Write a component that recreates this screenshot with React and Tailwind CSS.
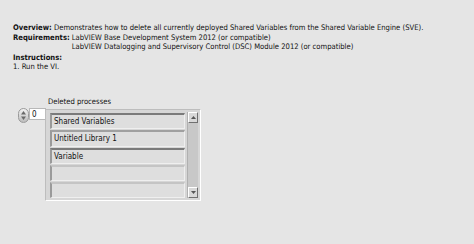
export default function App() {
  const rows = [
    { text: "Shared Variables", top: "border-t-[#7a7a7a]" },
    { text: "Untitled Library 1", top: "border-t-[#a0a0a0]" },
    { text: "Variable", top: "border-t-[#7a7a7a]" },
    { text: "", top: "border-t-[#c4c4c4]" },
    { text: "", top: "border-t-[#c4c4c4]" },
  ];

  return (
    <div
      className="w-[474px] h-[244px] bg-[#e5e5e5] overflow-hidden text-[#111] text-[7.6px] leading-[9.5px]"
      style={{ fontFamily: "'DejaVu Sans Condensed', Tahoma, sans-serif" }}
    >
      {/* Description */}
      <div className="pt-[23px] pl-[13px]">
        <div className="whitespace-nowrap">
          <span className="font-bold">Overview:</span> Demonstrates how to delete all currently deployed Shared Variables from the Shared Variable Engine (SVE).
        </div>
        <div className="flex whitespace-nowrap">
          <span className="font-bold mr-[2px]">Requirements:</span>
          <div>
            <div>LabVIEW Base Development System 2012 (or compatible)</div>
            <div>LabVIEW Datalogging and Supervisory Control (DSC) Module 2012 (or compatible)</div>
          </div>
        </div>
        <div className="font-bold mt-[1px]">Instructions:</div>
        <div>1. Run the VI.</div>
      </div>

      {/* Array control */}
      <div className="flex items-start mt-[25px] pl-[18px]">
        {/* Index */}
        <div className="flex items-start mt-[11px]">
          <div className="w-[11px] h-[15px] rounded-full border border-[#9a9a9a] bg-gradient-to-b from-[#f2f2f2] to-[#bdbdbd] flex flex-col items-center justify-center">
            <svg width="7" height="11" viewBox="0 0 7 11">
              <path d="M3.5 1 L6 4.5 H1 Z" fill="#6a6a6a" />
              <path d="M3.5 10 L6 6.5 H1 Z" fill="#6a6a6a" />
            </svg>
          </div>
          <div className="w-[17px] h-[12px] bg-white border border-[#b8b8b8] pl-[2px] leading-[11px] text-[8px]">0</div>
        </div>

        <div className="flex flex-col -ml-[1px]">
          <div className="pl-[3px] mb-[3px]">Deleted processes</div>
          <div className="w-[156px] border border-t-[#bdbdbd] border-l-[#bdbdbd] border-r-white border-b-white bg-[#d6d6d6] p-[2px] flex gap-[2px]">
            <div className="flex-1 flex flex-col gap-[1px] pl-[2px] pt-[1px]">
              {rows.map((r, i) => (
                <div
                  key={i}
                  className={`h-[16.3px] bg-[#dedede] border-t-[2px] border-l-[2px] border-b border-r ${r.top} border-l-[#9a9a9a] border-b-[#efefef] border-r-[#efefef] pl-[2px] leading-[13px] text-[8px] truncate`}
                >
                  {r.text}
                </div>
              ))}
            </div>
            <div className="w-[11px] bg-[#c8c8c8] flex flex-col justify-between border-l border-[#b0b0b0]">
              <div className="h-[11px] bg-[#d8d8d8] border border-t-white border-l-white border-r-[#707070] border-b-[#707070] flex items-center justify-center">
                <svg width="5" height="3" viewBox="0 0 5 3"><path d="M2.5 0 L5 3 H0 Z" fill="#555" /></svg>
              </div>
              <div className="h-[11px] bg-[#d8d8d8] border border-t-white border-l-white border-r-[#707070] border-b-[#707070] flex items-center justify-center">
                <svg width="5" height="3" viewBox="0 0 5 3"><path d="M2.5 3 L5 0 H0 Z" fill="#555" /></svg>
              </div>
            </div>
          </div>
        </div>
      </div>
    </div>
  );
}
